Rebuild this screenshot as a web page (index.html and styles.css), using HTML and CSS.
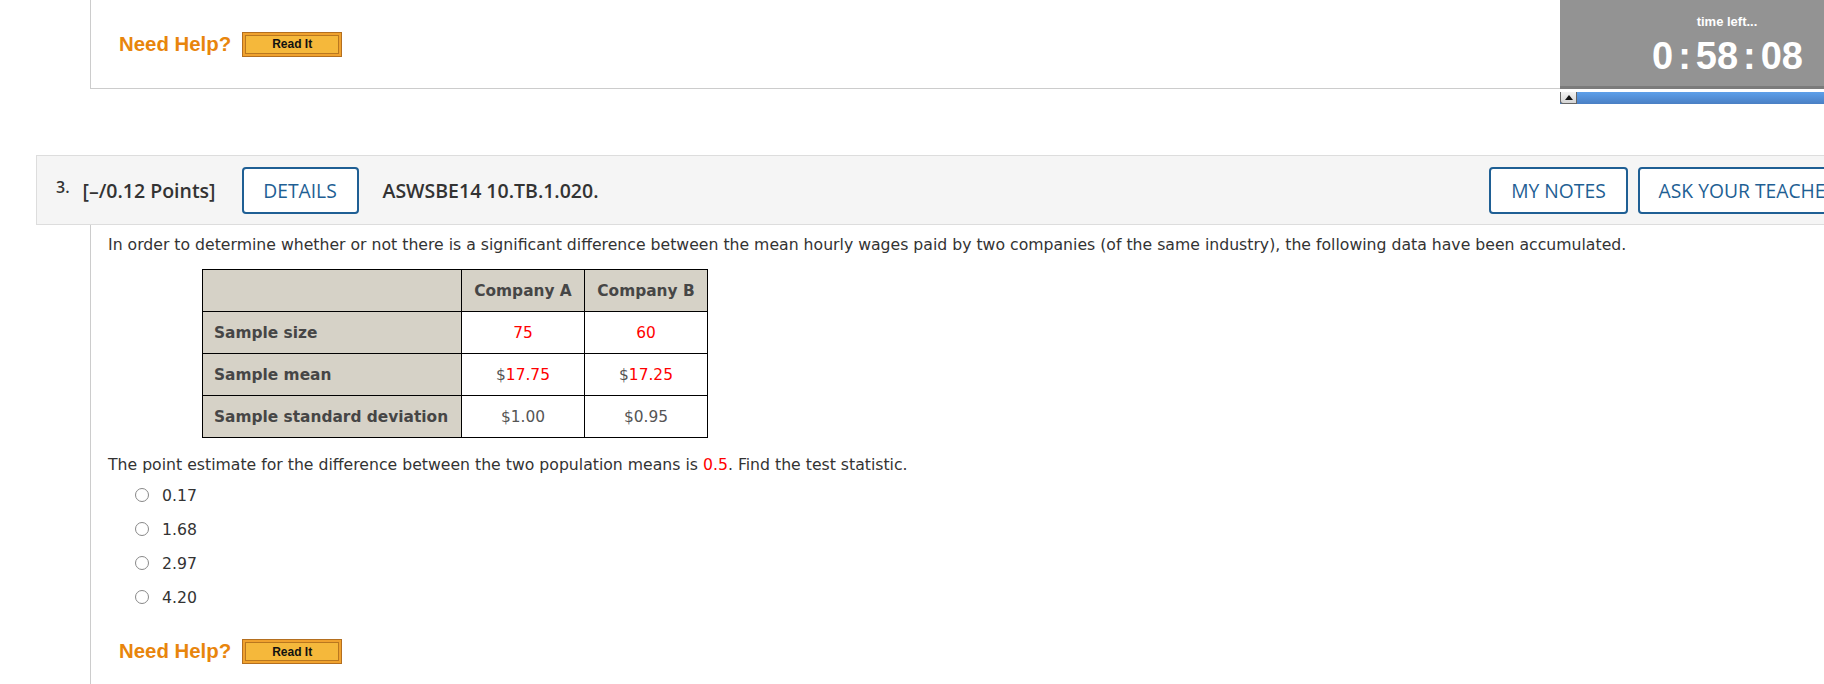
FILE: index.html
```html
<!DOCTYPE html>
<html>
<head>
<meta charset="utf-8">
<link rel="stylesheet" href="styles.css">
</head>
<body>
<div class="prev-card">
  <div class="help-row">
    <span class="need-help">Need Help?</span>
    <span class="read-it"><span class="read-it-inner">Read It</span></span>
  </div>
</div>

<div class="question">
  <div class="q-header">
    <span class="q-num">3.</span>
    <span class="q-points">[–/0.12 Points]</span>
    <span class="btn btn-details">DETAILS</span>
    <span class="q-code">ASWSBE14 10.TB.1.020.</span>
    <div class="q-actions">
      <span class="btn btn-notes">MY NOTES</span>
      <span class="btn btn-ask">ASK YOUR TEACHER</span>
    </div>
  </div>
  <div class="q-body">
    <p class="q-text">In order to determine whether or not there is a significant difference between the mean hourly wages paid by two companies (of the same industry), the following data have been accumulated.</p>
    <table class="data">
      <tr class="head"><th class="label"></th><th>Company A</th><th>Company B</th></tr>
      <tr><th class="label">Sample size</th><td><span class="red">75</span></td><td><span class="red">60</span></td></tr>
      <tr><th class="label">Sample mean</th><td>$<span class="red">17.75</span></td><td>$<span class="red">17.25</span></td></tr>
      <tr><th class="label">Sample standard deviation</th><td>$1.00</td><td>$0.95</td></tr>
    </table>
    <p class="q-prompt">The point estimate for the difference between the two population means is <span class="red">0.5</span>. Find the test statistic.</p>
    <ul class="options">
      <li><span class="radio"></span><span>0.17</span></li>
      <li><span class="radio"></span><span>1.68</span></li>
      <li><span class="radio"></span><span>2.97</span></li>
      <li><span class="radio"></span><span>4.20</span></li>
    </ul>
    <div class="help-row help-bottom">
      <span class="need-help">Need Help?</span>
      <span class="read-it"><span class="read-it-inner">Read It</span></span>
    </div>
  </div>
</div>

<div class="timer">
  <div class="timer-box">
    <div class="timer-label">time left...</div>
    <div class="timer-value">0<span class="colon">:</span>58<span class="colon">:</span>08</div>
  </div>
  <div class="timer-bar">
    <span class="timer-toggle"><svg width="8" height="5" viewBox="0 0 8 5"><path d="M0 5 L4 0 L8 5 Z" fill="#111"/></svg></span>
  </div>
</div>
</body>
</html>
```

FILE: styles.css
```css
html, body {
  margin: 0;
  padding: 0;
  background: #fff;
  overflow: hidden;
}
body {
  width: 1824px;
  height: 684px;
  position: relative;
  font-family: "DejaVu Sans", Verdana, sans-serif;
  font-size: 15.7px;
  color: #333;
}

/* previous question card */
.prev-card {
  margin-left: 90px;
  height: 88px;
  border-left: 1px solid #ccc;
  border-bottom: 1px solid #ccc;
  display: flex;
  align-items: center;
  padding-left: 28px;
}
.help-row {
  display: flex;
  align-items: center;
  gap: 11px;
}
.need-help {
  font-family: "Liberation Sans", Arial, sans-serif;
  font-weight: bold;
  font-size: 20.4px;
  color: #e8850c;
}
.read-it {
  display: inline-block;
  width: 100px;
  height: 25px;
  box-sizing: border-box;
  border: 1px solid #b46f1f;
  background: #f0a22e;
  padding: 2px;
}
.read-it-inner {
  display: flex;
  align-items: center;
  justify-content: center;
  height: 100%;
  box-sizing: border-box;
  border: 1px solid #b9771f;
  background: #f5b83b;
  font-family: "Liberation Sans", Arial, sans-serif;
  font-weight: bold;
  font-size: 12px;
  color: #111;
}

/* question */
.question {
  margin-top: 66px;
}
.q-header {
  margin-left: 36px;
  width: 1802px;
  height: 68px;
  border: 1px solid #ddd;
  background: #f5f5f5;
  display: flex;
  align-items: center;
  padding-left: 19px;
  font-family: "Open Sans", sans-serif;
  font-weight: 600;
  color: #333;
}
.q-num {
  font-size: 16px;
  margin-bottom: 6px;
  margin-right: 13px;
}
.q-points {
  font-size: 19.5px;
  margin-right: 26px;
}
.btn {
  display: inline-flex;
  align-items: center;
  justify-content: center;
  height: 47px;
  box-sizing: border-box;
  border: 2px solid #1f5f94;
  border-radius: 4px;
  background: #fff;
  color: #1f5f94;
  font-family: "Open Sans", sans-serif;
  font-weight: 400;
  font-size: 19.3px;
  padding: 0;
  white-space: nowrap;
}
.btn-details {
  width: 117px;
  margin-right: 24px;
}
.q-code {
  font-size: 19.5px;
}
.q-actions {
  margin-left: auto;
  display: flex;
  gap: 10px;
}
.btn-notes {
  width: 139px;
}
.btn-ask {
  width: 220px;
}

.q-body {
  margin-left: 90px;
  border-left: 1px solid #ccc;
  padding-left: 17px;
  padding-top: 10px;
  padding-bottom: 40px;
}
.q-text, .q-prompt {
  margin: 0;
  line-height: 20px;
  white-space: nowrap;
}
.red { color: #f00; }

table.data {
  margin: 14px 0 17px 94px;
  border-collapse: separate;
  border-spacing: 0;
  border-top: 1px solid #000;
  border-left: 1px solid #000;
  table-layout: fixed;
  font-size: 15.4px;
}
table.data th, table.data td {
  border-right: 1px solid #000;
  border-bottom: 1px solid #000;
  height: 42px;
  padding: 0;
  box-sizing: border-box;
}
table.data th {
  background: #d6d2c7;
  color: #464646;
  font-weight: bold;
}
table.data th.label {
  width: 259px;
  text-align: left;
  padding-left: 11px;
}
table.data tr.head th:not(.label) {
  width: 123px;
  text-align: center;
}
table.data td {
  width: 123px;
  text-align: center;
  color: #555;
}

.options {
  list-style: none;
  margin: 3px 0 0 0;
  padding: 0 0 0 27px;
}
.options li {
  height: 34px;
  display: flex;
  align-items: center;
}
.radio {
  width: 12px;
  height: 12px;
  border: 1px solid #888;
  border-radius: 50%;
  margin-right: 13px;
  background: #fff;
}
.help-bottom {
  margin-top: 25px;
  padding-left: 11px;
}

/* timer overlay */
.timer {
  position: absolute;
  top: 0;
  left: 1560px;
  width: 264px;
}
.timer-box {
  height: 89px;
  background: #939393;
  border-bottom: 3px solid #7b7b7b;
  box-sizing: border-box;
  padding-left: 92px;
  padding-top: 14px;
  font-family: "Liberation Sans", Arial, sans-serif;
  font-weight: bold;
  color: #fff;
}
.timer-label {
  font-size: 13px;
  width: 150px;
  text-align: center;
  line-height: 16px;
}
.timer-value {
  font-size: 38px;
  line-height: 44px;
  margin-top: 4px;
}
.colon {
  margin: 0 5px;
}
.timer-bar {
  margin-top: 3px;
  height: 12px;
  background: linear-gradient(#5ea0ea, #4a7fc4);
  position: relative;
}
.timer-toggle {
  position: absolute;
  left: 0;
  top: 0;
  width: 17px;
  height: 12px;
  box-sizing: border-box;
  background: linear-gradient(#f2f2f2, #d4d4d4);
  border: 1px solid #666;
  border-top: none;
  border-radius: 0 0 0 3px;
  display: flex;
  align-items: center;
  justify-content: center;
}
```
